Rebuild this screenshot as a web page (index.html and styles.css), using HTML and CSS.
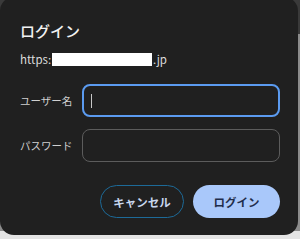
FILE: index.html
```html
<!DOCTYPE html>
<html lang="ja">
<head>
    <meta charset="UTF-8">
    <meta name="viewport" content="width=device-width, initial-scale=1.0">
    <title>ログイン</title>
    <link rel="stylesheet" href="styles.css">
</head>
<body>
    <div class="dialog">
        <h1 class="title">ログイン</h1>
        <div class="site">https:<span class="mask"></span>.jp</div>

        <div class="form">
            <label class="label">ユーザー名</label>
            <div class="field focused"><span class="caret"></span></div>
            <label class="label">パスワード</label>
            <div class="field"></div>
        </div>

        <div class="buttons">
            <button class="btn cancel">キャンセル</button>
            <button class="btn login">ログイン</button>
        </div>
    </div>
</body>
</html>
```

FILE: styles.css
```css
body {
    margin: 0;
    padding: 0;
    width: 300px;
    height: 239px;
    overflow: hidden;
    font-family: "Noto Sans CJK JP", "Noto Sans", "Liberation Sans", sans-serif;
    background: linear-gradient(to bottom, #3a3a3a 0, #3a3a3a 34px, #8c8c8c 34px, #8c8c8c 231px, #e4e4e4 231px);
}
.dialog {
    box-sizing: border-box;
    width: 298px;
    height: 238px;
    margin-top: -3px;
    padding: 24px 18px 0 20px;
    background-color: #202020;
    border-radius: 14px;
    color: #e6e6e6;
}
.title {
    margin: 0;
    font-size: 15px;
    line-height: 20px;
    font-weight: 500;
    color: #f2f2f2;
}
.site {
    margin-top: 10px;
    font-size: 11.5px;
    line-height: 16px;
    color: #dcdcdc;
    display: flex;
    align-items: center;
}
.mask {
    display: inline-block;
    width: 100px;
    height: 13px;
    background-color: #ffffff;
    margin: 0 1px;
}
.form {
    margin-top: 17px;
    display: grid;
    grid-template-columns: 62px 1fr;
    row-gap: 12px;
    align-items: center;
}
.label {
    font-size: 10.5px;
    color: #d0d0d0;
}
.field {
    box-sizing: border-box;
    height: 33px;
    border: 1px solid #5c5c5c;
    border-radius: 8px;
    display: flex;
    align-items: center;
    padding-left: 8px;
}
.field.focused {
    border: 2px solid #5b9bf0;
    padding-left: 7px;
}
.caret {
    width: 1px;
    height: 14px;
    background-color: #c8c8c8;
}
.buttons {
    margin-top: 23px;
    display: flex;
    justify-content: flex-end;
    gap: 9px;
}
.btn {
    box-sizing: border-box;
    height: 33px;
    border-radius: 17px;
    font-family: inherit;
    font-size: 11.5px;
    font-weight: bold;
}
.cancel {
    width: 84px;
    background: transparent;
    border: 1.5px solid #1d6a98;
    color: #c9d7ee;
}
.login {
    width: 87px;
    background-color: #a9c8fa;
    border: none;
    color: #1f2d4a;
}
```
